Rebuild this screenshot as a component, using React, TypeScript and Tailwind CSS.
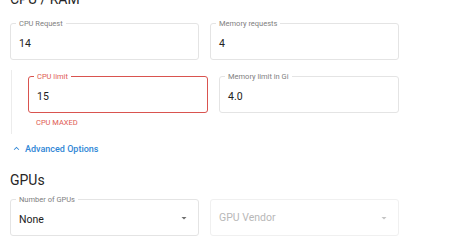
import React from "react";

interface FieldProps {
  label: string;
  value?: string;
  placeholder?: string;
  error?: boolean;
  select?: boolean;
  disabled?: boolean;
}

function ArrowDrop({ light }: { light?: boolean }) {
  return (
    <svg
      viewBox="0 0 24 24"
      className={`absolute right-[8px] top-1/2 -translate-y-1/2 w-[12px] h-[12px] ${light ? "text-[#c4c4c4]" : "text-[#6f6f6f]"}`}
      fill="currentColor"
    >
      <path d="M7 10l5 5 5-5z" />
    </svg>
  );
}

function Field({ label, value, placeholder, error, select, disabled }: FieldProps) {
  const border = error
    ? "border-[1.5px] border-[#d9534f]"
    : disabled
    ? "border border-[#f0f0f0]"
    : "border border-[#e4e4e4]";

  return (
    <div className={`relative h-[37px] rounded-[3px] ${border}`}>
      {!placeholder && (
        <span
          className={`absolute -top-[4px] left-[5px] px-[3px] bg-white text-[7.5px] leading-[8px] ${
            error ? "text-[#e05a52]" : "text-[#808080]"
          }`}
        >
          {label}
        </span>
      )}
      <div className="h-full flex items-center pl-[8px] pt-[4px]">
        {placeholder ? (
          <span className="text-[10.5px] text-[#b8b8b8] -mt-[4px]">{placeholder}</span>
        ) : (
          <span className="text-[10.5px] text-[#222]">{value}</span>
        )}
      </div>
      {select && <ArrowDrop light={disabled} />}
    </div>
  );
}

export default function App() {
  return (
    <div className="w-[474px] h-[251px] overflow-hidden bg-white font-['Roboto','Liberation_Sans',sans-serif]">
      <div className="ml-[10px] w-[389px]">
        {/* CPU / RAM */}
        <h2 className="-mt-[8px] text-[14px] leading-[14px] text-[#262626]">CPU / RAM</h2>

        <div className="mt-[17px] grid grid-cols-2 gap-[11px]">
          <Field label="CPU Request" value="14" />
          <Field label="Memory requests" value="4" />
        </div>

        {/* advanced options body */}
        <div className="mt-[10px] ml-[1px] border-l border-[#ececec] pl-[16px] pt-[6px] pb-[7px]">
          <div className="grid grid-cols-2 gap-[11px] items-start">
            <div>
              <Field label="CPU limit" value="15" error />
              <p className="mt-[6px] ml-[8px] text-[7.5px] leading-[8px] text-[#e05a52]">CPU MAXED</p>
            </div>
            <Field label="Memory limit in Gi" value="4.0" />
          </div>
        </div>

        <button className="mt-[9px] flex items-center gap-[3px] ml-[1px] text-[#2f86d6] text-[9px] leading-[10px] font-medium">
          <svg viewBox="0 0 24 24" className="w-[11px] h-[11px]" fill="currentColor">
            <path d="M7.41 15.41 12 10.83l4.59 4.58L18 14l-6-6-6 6z" />
          </svg>
          Advanced Options
        </button>

        {/* GPUs */}
        <h2 className="mt-[18px] text-[14px] leading-[16px] text-[#262626]">GPUs</h2>

        <div className="mt-[11px] grid grid-cols-2 gap-[11px]">
          <Field label="Number of GPUs" value="None" select />
          <Field label="GPU Vendor" placeholder="GPU Vendor" select disabled />
        </div>
      </div>
    </div>
  );
}
